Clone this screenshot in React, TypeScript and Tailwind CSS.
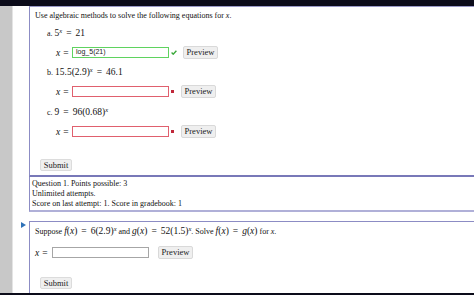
import React from "react";

const V = ({ children }: { children: React.ReactNode }) => (
  <span className="italic">{children}</span>
);

const Sup = ({ children }: { children: React.ReactNode }) => (
  <sup className="text-[6.5px] italic">{children}</sup>
);

const Eq = () => <span className="mx-[4px]">=</span>;

const PreviewBtn = () => (
  <div className="h-[13px] w-[35px] flex items-center justify-center bg-[#efefef] border border-[#d9d9d9] rounded-[2px] text-[8.5px] text-[#222]">
    Preview
  </div>
);

const SubmitBtn = () => (
  <div className="h-[12px] w-[32px] flex items-center justify-center bg-[#efefef] border border-[#dcdcdc] rounded-[2px] text-[8.5px] text-[#222]">
    Submit
  </div>
);

function AnswerRow({ status, value }: { status: "ok" | "bad"; value?: string }) {
  return (
    <div className="flex items-center h-[13px] ml-[21px]">
      <div className="w-[16px] text-[9.5px] leading-[10px] whitespace-nowrap">
        <V>x</V>
        <span className="ml-[3px]">=</span>
      </div>
      <div
        className={
          "h-[11px] w-[97px] border flex items-center pl-[3px] text-[7px] font-['Liberation_Sans'] text-[#222] " +
          (status === "ok" ? "border-[#5fd35f]" : "border-[#e0606e]")
        }
      >
        {value}
      </div>
      {status === "ok" ? (
        <svg width="6" height="5" viewBox="0 0 6 5" className="ml-[2px]">
          <path d="M0.6 2.6 L2.2 4.2 L5.4 0.8" stroke="#3aa83a" strokeWidth="1.4" fill="none" />
        </svg>
      ) : (
        <div className="ml-[2px] w-[3px] h-[3px] bg-[#c0283a]" />
      )}
      <div className={status === "ok" ? "ml-[6px]" : "ml-[7px]"}>
        <PreviewBtn />
      </div>
    </div>
  );
}

export default function App() {
  return (
    <div className="w-[474px] h-[295px] overflow-hidden bg-white flex flex-col font-['Liberation_Serif',serif] text-[#111]">
      <div className="h-[6px] bg-[#0c0c1a] shrink-0" />
      <div className="flex flex-1 min-h-0">
        <div className="w-[13px] bg-[#c8c8c8] border-r border-[#e4e4e4] shrink-0" />
        <div className="flex-1 flex flex-col min-w-0">
          {/* Question 1 */}
          <div className="ml-[16px] h-[171px] border-l border-t border-b-2 border-l-[#8c8cc4] border-t-[#9a9ac8] border-b-[#7878b8] pl-[5px] flex flex-col">
            <div className="mt-[4px] h-[10px] leading-[10px] text-[8px] whitespace-nowrap">
              Use algebraic methods to solve the following equations for <V>x</V>.
            </div>
            <div className="mt-[7px] h-[10px] leading-[10px] text-[8px] ml-[12px] whitespace-nowrap">
              a. <span className="text-[9.5px]">5<Sup>x</Sup><Eq />21</span>
            </div>
            <div className="mt-[8px]">
              <AnswerRow status="ok" value="log_5(21)" />
            </div>
            <div className="mt-[8px] h-[10px] leading-[10px] text-[8px] ml-[12px] whitespace-nowrap">
              b. <span className="text-[9.5px]">15.5(2.9)<Sup>x</Sup><Eq />46.1</span>
            </div>
            <div className="mt-[8px]">
              <AnswerRow status="bad" />
            </div>
            <div className="mt-[9px] h-[10px] leading-[10px] text-[8px] ml-[12px] whitespace-nowrap">
              c. <span className="text-[9.5px]">9<Eq />96(0.68)<Sup>x</Sup></span>
            </div>
            <div className="mt-[8px]">
              <AnswerRow status="bad" />
            </div>
            <div className="mt-[21px] ml-[5px]">
              <SubmitBtn />
            </div>
          </div>
          {/* Info */}
          <div className="ml-[16px] h-[35px] border-l border-l-[#8c8cc4] border-b-2 border-b-[#b0b0d8] pl-[2px] pt-[2px] text-[8px] leading-[10px] whitespace-nowrap">
            <div>Question 1. Points possible: 3</div>
            <div>Unlimited attempts.</div>
            <div>Score on last attempt: 1. Score in gradebook: 1</div>
          </div>
          <div className="h-[9px] shrink-0" />
          {/* Question 2 */}
          <div className="flex flex-1 min-h-0">
            <div className="w-[16px] shrink-0 pt-[1px] pl-[8px]">
              <svg width="5" height="6" viewBox="0 0 5 6">
                <path d="M0 0 L5 3 L0 6 Z" fill="#2f72b8" />
              </svg>
            </div>
            <div className="flex-1 border-l border-t border-[#8c8cc4] pl-[5px] flex flex-col">
              <div className="mt-[4px] h-[10px] leading-[10px] text-[8px] whitespace-nowrap">
                Suppose{" "}
                <span className="text-[9.5px]">
                  <V>f</V>(<V>x</V>)<Eq />6(2.9)<Sup>x</Sup>
                </span>{" "}
                and{" "}
                <span className="text-[9.5px]">
                  <V>g</V>(<V>x</V>)<Eq />52(1.5)<Sup>x</Sup>
                </span>
                . Solve{" "}
                <span className="text-[9.5px]">
                  <V>f</V>(<V>x</V>)<Eq /><V>g</V>(<V>x</V>)
                </span>{" "}
                for <V>x</V>.
              </div>
              <div className="mt-[10px] flex items-center h-[13px]">
                <div className="w-[17px] text-[9.5px] leading-[10px] whitespace-nowrap">
                  <V>x</V>
                  <span className="ml-[3px]">=</span>
                </div>
                <div className="h-[11px] w-[97px] border border-[#a6a6a6]" />
                <div className="ml-[9px]">
                  <PreviewBtn />
                </div>
              </div>
              <div className="mt-[18px] ml-[5px]">
                <SubmitBtn />
              </div>
            </div>
          </div>
        </div>
      </div>
      <div className="h-[2px] bg-[#0c0c1a] shrink-0" />
    </div>
  );
}
